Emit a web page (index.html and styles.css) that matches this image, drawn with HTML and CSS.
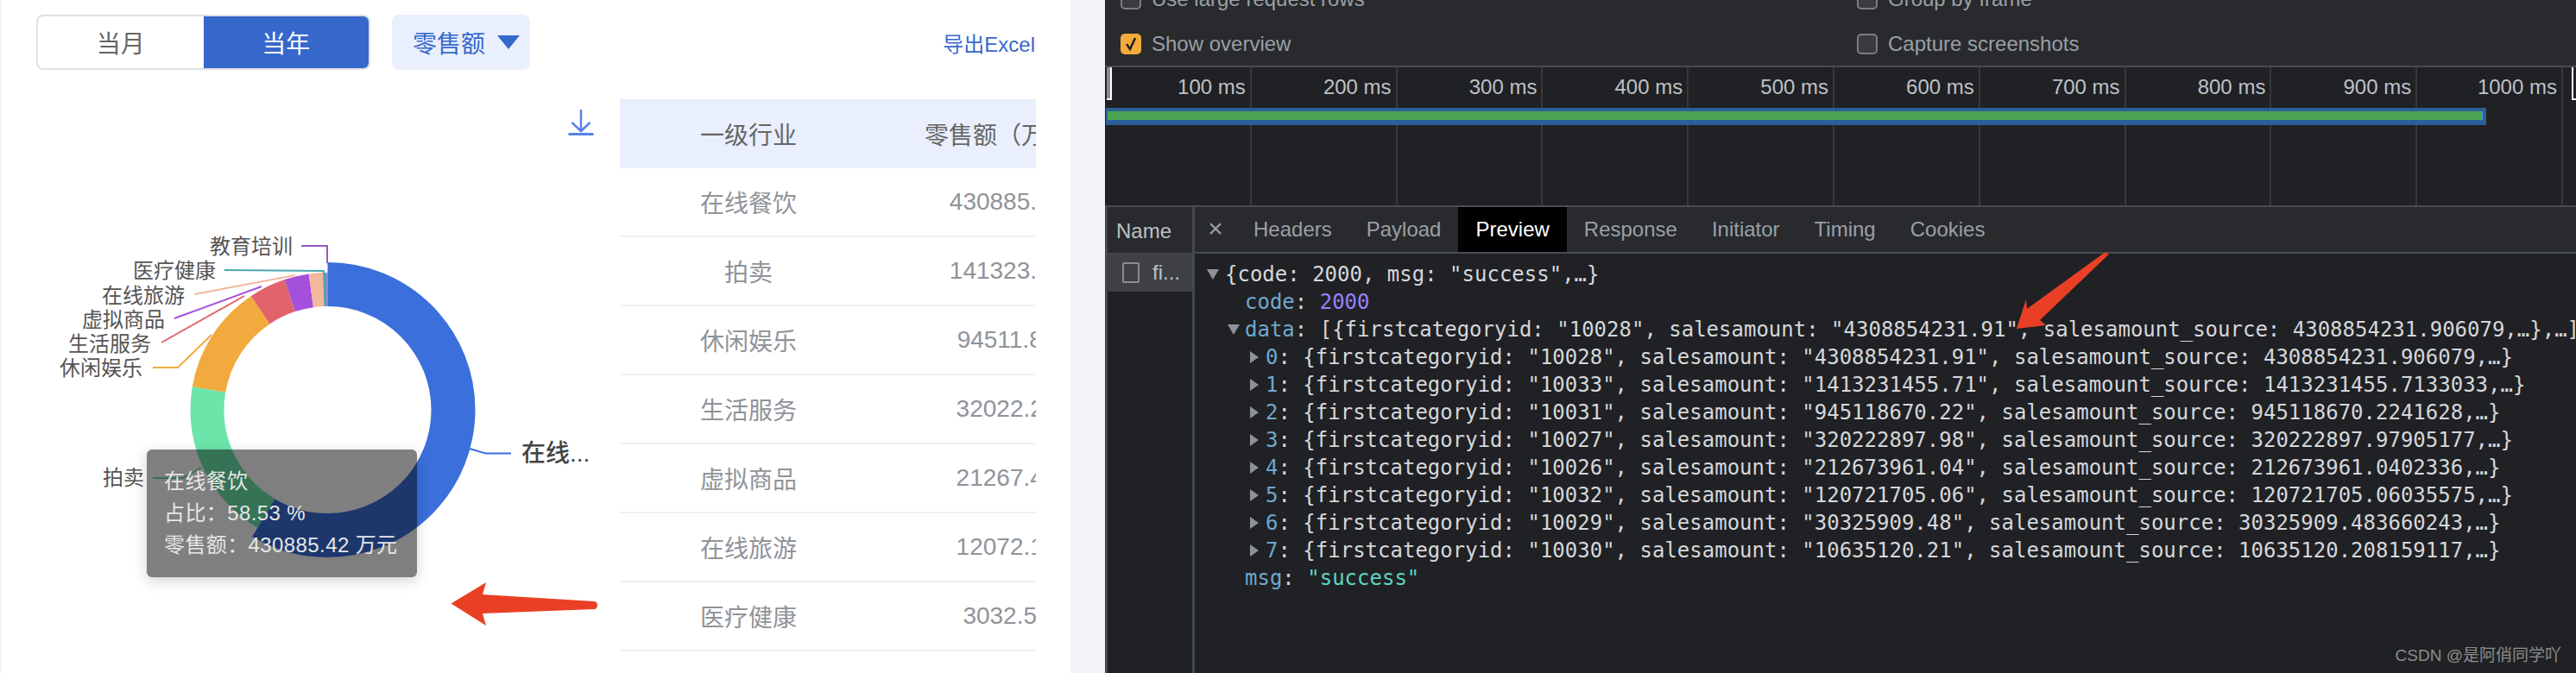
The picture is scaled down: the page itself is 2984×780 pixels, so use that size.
FILE: index.html
```html
<!DOCTYPE html>
<html lang="zh">
<head>
<meta charset="utf-8">
<title>零售额</title>
<link rel="stylesheet" href="styles.css">
</head>
<body>
<div class="page">
  <section class="panel">
    <div class="toolbar">
      <div class="toggle">
        <div class="seg">当月</div>
        <div class="seg seg-on">当年</div>
      </div>
      <div class="drop"><span>零售额</span><i class="caret"></i></div>
      <a class="export">导出Excel</a>
    </div>
    <div class="content">
      <div class="chart">
        <svg class="chart-svg" viewBox="2 115 716 665" width="716" height="665">
          <g fill="none" transform="rotate(-90 379.5 475)">
            <circle cx="379.5" cy="475" r="145.5" stroke="#3b6fdb" stroke-width="51" pathLength="100" stroke-dasharray="58.53 100"/>
            <circle cx="379.5" cy="475" r="139.5" stroke="#6ce5aa" stroke-width="39" pathLength="100" stroke-dasharray="19.197 100" stroke-dashoffset="-58.53"/>
            <circle cx="379.5" cy="475" r="139.5" stroke="#f2aa3e" stroke-width="39" pathLength="100" stroke-dasharray="12.838 100" stroke-dashoffset="-77.727"/>
            <circle cx="379.5" cy="475" r="139.5" stroke="#e2646b" stroke-width="39" pathLength="100" stroke-dasharray="4.35 100" stroke-dashoffset="-90.565"/>
            <circle cx="379.5" cy="475" r="139.5" stroke="#a550dc" stroke-width="39" pathLength="100" stroke-dasharray="2.889 100" stroke-dashoffset="-94.915"/>
            <circle cx="379.5" cy="475" r="139.5" stroke="#f3b79c" stroke-width="39" pathLength="100" stroke-dasharray="1.64 100" stroke-dashoffset="-97.804"/>
            <circle cx="379.5" cy="475" r="139.5" stroke="#4aa8ac" stroke-width="39" pathLength="100" stroke-dasharray="0.412 100" stroke-dashoffset="-99.444"/>
            <circle cx="379.5" cy="475" r="139.5" stroke="#9558c0" stroke-width="39" pathLength="100" stroke-dasharray="0.144 100" stroke-dashoffset="-99.856"/>
          </g>
          <g fill="none" stroke-width="2">
            <path stroke="#9558c0" d="M349 285H379V305"/>
            <path stroke="#4aa8ac" d="M260 313L375 314V316"/>
            <path stroke="#f3b79c" d="M225 341L342 319"/>
            <path stroke="#a550dc" d="M202 369L303 332"/>
            <path stroke="#e2646b" d="M187 397L283 343"/>
            <path stroke="#f2aa3e" d="M177 426H206L245 388"/>
            <path stroke="#6ce5aa" d="M177 554H212L233 542"/>
            <path stroke="#3b6fdb" d="M544 520L562.500 525.500H592"/>
          </g>
          <g class="labels">
            <text x="339" y="285">教育培训</text>
            <text x="250" y="313">医疗健康</text>
            <text x="214" y="342">在线旅游</text>
            <text x="191" y="370">虚拟商品</text>
            <text x="175" y="398">生活服务</text>
            <text x="165" y="426">休闲娱乐</text>
            <text x="167" y="553">拍卖</text>
            <text class="label-main" x="604" y="525">在线...</text>
          </g>
          <g fill="none" stroke="#5b80e8" stroke-width="2.500">
            <path d="M673 127V151M662.500 142L673 152L683.500 142"/>
            <path stroke-width="3" d="M658.500 155.500H687.500"/>
          </g>
          <path fill="#e94025" d="M522.500 699.500L563 675L559 689L689 697Q692 698 692 701.500Q692 705 689 706L559 711L563 725Z"/>
        </svg>
        <div class="tip">
          <div>在线餐饮</div>
          <div>占比：58.53 %</div>
          <div>零售额：430885.42 万元</div>
        </div>
      </div>
      <div class="table">
        <div class="tr th"><div>一级行业</div><div>零售额（万元）</div></div>
        <div class="tr"><div>在线餐饮</div><div class="num">430885.42</div></div>
        <div class="tr"><div>拍卖</div><div class="num">141323.14</div></div>
        <div class="tr"><div>休闲娱乐</div><div class="num">94511.87</div></div>
        <div class="tr"><div>生活服务</div><div class="num">32022.29</div></div>
        <div class="tr"><div>虚拟商品</div><div class="num">21267.40</div></div>
        <div class="tr"><div>在线旅游</div><div class="num">12072.17</div></div>
        <div class="tr"><div>医疗健康</div><div class="num">3032.59</div></div>
      </div>
    </div>
  </section>

  <section class="devtools">
    <div class="settings">
      <div class="settings-grid">
        <label class="opt"><i class="cb"></i>Use large request rows</label>
        <label class="opt"><i class="cb"></i>Group by frame</label>
        <label class="opt"><i class="cb cb-on"><svg viewBox="0 0 24 24" width="24" height="24"><path d="M7 12L11 18L17 5" fill="none" stroke="#202124" stroke-width="2.500"/></svg></i>Show overview</label>
        <label class="opt"><i class="cb"></i>Capture screenshots</label>
      </div>
    </div>
    <div class="overview">
      <div class="ticks">
        <div class="tick">100 ms</div><div class="tick">200 ms</div><div class="tick">300 ms</div><div class="tick">400 ms</div><div class="tick">500 ms</div>
        <div class="tick">600 ms</div><div class="tick">700 ms</div><div class="tick">800 ms</div><div class="tick">900 ms</div><div class="tick">1000 ms</div>
      </div>
      <div class="bar"><div class="bar-in"></div></div>
      <i class="handle handle-l"></i>
      <i class="handle handle-r"></i>
    </div>
    <div class="detail">
      <aside class="side">
        <div class="side-head">Name</div>
        <div class="side-row"><i class="file"></i><span>fi...</span></div>
      </aside>
      <div class="pane">
        <nav class="tabs">
          <span class="close">×</span>
          <span class="tab">Headers</span>
          <span class="tab">Payload</span>
          <span class="tab tab-on">Preview</span>
          <span class="tab">Response</span>
          <span class="tab">Initiator</span>
          <span class="tab">Timing</span>
          <span class="tab">Cookies</span>
        </nav>
        <div class="preview">
          <div class="row lv0"><i class="tri-open"></i><span>{code: 2000, msg: "success",…}</span></div>
          <div class="row lv1"><span><b class="k">code</b>: <b class="n">2000</b></span></div>
          <div class="row lv1t"><i class="tri-open"></i><span><b class="k">data</b>: [{firstcategoryid: "10028", salesamount: "4308854231.91", salesamount_source: 4308854231.906079,…},…]</span></div>
          <div class="row lv2"><i class="tri"></i><span><b class="k">0</b>: {firstcategoryid: "10028", salesamount: "4308854231.91", salesamount_source: 4308854231.906079,…}</span></div>
          <div class="row lv2"><i class="tri"></i><span><b class="k">1</b>: {firstcategoryid: "10033", salesamount: "1413231455.71", salesamount_source: 1413231455.7133033,…}</span></div>
          <div class="row lv2"><i class="tri"></i><span><b class="k">2</b>: {firstcategoryid: "10031", salesamount: "945118670.22", salesamount_source: 945118670.2241628,…}</span></div>
          <div class="row lv2"><i class="tri"></i><span><b class="k">3</b>: {firstcategoryid: "10027", salesamount: "320222897.98", salesamount_source: 320222897.97905177,…}</span></div>
          <div class="row lv2"><i class="tri"></i><span><b class="k">4</b>: {firstcategoryid: "10026", salesamount: "212673961.04", salesamount_source: 212673961.0402336,…}</span></div>
          <div class="row lv2"><i class="tri"></i><span><b class="k">5</b>: {firstcategoryid: "10032", salesamount: "120721705.06", salesamount_source: 120721705.06035575,…}</span></div>
          <div class="row lv2"><i class="tri"></i><span><b class="k">6</b>: {firstcategoryid: "10029", salesamount: "30325909.48", salesamount_source: 30325909.483660243,…}</span></div>
          <div class="row lv2"><i class="tri"></i><span><b class="k">7</b>: {firstcategoryid: "10030", salesamount: "10635120.21", salesamount_source: 10635120.208159117,…}</span></div>
          <div class="row lv1"><span><b class="k">msg</b>: <b class="s">"success"</b></span></div>
        </div>
        <svg class="callout" viewBox="0 0 120 100" width="120" height="100">
          <path fill="#e94025" d="M103.500 1Q107 0 108.500 3L29 79L36 85L2 89L13 55L14 66Z"/>
        </svg>
      </div>
    </div>
    <div class="mark">CSDN @是阿俏同学吖</div>
  </section>
</div>
</body>
</html>
```
FILE: styles.css
```css
* { box-sizing: border-box; }
html, body { margin: 0; padding: 0; }
body {
  width: 2984px;
  height: 780px;
  overflow: hidden;
  background: #f2f4f9;
  font-family: "Liberation Sans", "Noto Sans CJK SC", sans-serif;
}
.page { display: flex; height: 780px; padding-left: 2px; }

/* left panel */
.panel {
  width: 1238px;
  height: 780px;
  margin-right: 40px;
  padding-top: 17px;
  background: #fff;
  flex: none;
  overflow: hidden;
}
.toolbar {
  display: flex;
  align-items: center;
  height: 64px;
  padding: 0 41px 0 40px;
  font-size: 28px;
}
.toggle {
  display: flex;
  width: 387px;
  height: 64px;
  flex: none;
  border: 2px solid #dfe0e5;
  border-radius: 8px;
  overflow: hidden;
}
.seg {
  flex: 1;
  display: flex;
  align-items: center;
  justify-content: center;
  color: #666;
}
.seg-on { background: #3668cc; color: #fff; }
.drop {
  display: flex;
  align-items: center;
  gap: 14px;
  height: 64px;
  margin-left: 25px;
  padding: 0 12px 0 24px;
  border-radius: 8px;
  background: #e9effc;
  color: #3668cc;
}
.caret {
  width: 0;
  height: 0;
  border-left: 13px solid transparent;
  border-right: 13px solid transparent;
  border-top: 16px solid #3668cc;
}
.export { margin-left: auto; font-size: 24px; color: #3668cc; }

.content { display: flex; height: 665px; margin-top: 34px; }
.chart { position: relative; width: 716px; height: 665px; flex: none; }
.chart-svg { display: block; }
.labels text {
  font-size: 24px;
  fill: #555;
  text-anchor: end;
  dominant-baseline: central;
}
.labels .label-main {
  font-size: 28px;
  font-weight: 500;
  fill: #444;
  text-anchor: start;
}
.tip {
  position: absolute;
  left: 168px;
  top: 406px;
  width: 313px;
  height: 148px;
  padding: 18px 20px;
  background: rgba(0, 0, 0, .5);
  border-radius: 6px;
  box-shadow: 0 4px 16px rgba(0, 0, 0, .18);
  color: #e6e6e6;
  font-size: 24px;
  line-height: 37px;
  letter-spacing: .4px;
  white-space: nowrap;
}

.table { width: 482px; overflow: hidden; flex: none; }
.tr {
  display: grid;
  grid-template-columns: 298px 306px;
  width: 604px;
  height: 80px;
  align-items: center;
  text-align: center;
  font-size: 28px;
  color: #909399;
  border-bottom: 2px solid #eef0f5;
}
.th { background: #e9effc; color: #666; border-bottom: 0; }
.num { padding-right: 6px; }

/* devtools */
.devtools {
  position: relative;
  width: 1704px;
  height: 780px;
  flex: none;
  background: #292a2d;
  color: #9aa0a6;
  font-size: 24px;
  overflow: hidden;
}
.settings { height: 78px; border-bottom: 2px solid #494c50; overflow: hidden; }
.settings-grid {
  display: grid;
  grid-template-columns: 853px 1fr;
  grid-auto-rows: 52px;
  margin-top: -27px;
  padding-left: 18px;
}
.opt { display: flex; align-items: center; gap: 12px; }
.cb {
  width: 24px;
  height: 24px;
  flex: none;
  border: 2px solid #7a7d81;
  border-radius: 5px;
  background: #3a3b3e;
}
.cb-on { border: 0; background: #f4ab3a; }
.cb svg { display: block; }

.overview {
  position: relative;
  height: 162px;
  padding-left: 1px;
  background: #202124;
  border-bottom: 2px solid #494c50;
}
.ticks { display: grid; grid-template-columns: repeat(10, 168.8px); height: 160px; }
.tick {
  padding-right: 5px;
  border-right: 2px solid #36383c;
  text-align: right;
  line-height: 46px;
  color: #bdc1c6;
}
.bar {
  position: absolute;
  left: 1px;
  top: 47px;
  width: 1599px;
  height: 20px;
  padding: 4px 4px 6px 2px;
  background: #2c5f97;
}
.bar-in { height: 10px; background: #4ca553; border-right: 2px solid #4f8fd0; }
.handle { position: absolute; top: 0; width: 6px; height: 38px; }
.handle-l { left: 2px; background: #8a8c8f; border-right: 2px solid #fff; border-bottom: 2px solid #fff; }
.handle-r { right: 0; width: 5px; border-left: 2px solid #fff; border-bottom: 2px solid #fff; }

.detail { display: flex; height: 540px; }
.side {
  width: 104px;
  flex: none;
  background: #202124;
  border-left: 3px solid #45484c;
  border-right: 3px solid #45484c;
}
.side-head {
  height: 54px;
  padding: 0 10px;
  line-height: 56px;
  color: #bdc1c6;
  background: #292a2d;
  border-bottom: 1px solid #45484c;
}
.side-row {
  display: flex;
  align-items: center;
  gap: 15px;
  height: 44px;
  padding-left: 17px;
  background: #3e4043;
  color: #bdc1c6;
}
.file {
  width: 20px;
  height: 24px;
  flex: none;
  border: 2px solid #8a8d91;
  border-radius: 2px;
}
.pane { position: relative; flex: 1; min-width: 0; background: #202124; }
.tabs {
  display: flex;
  height: 54px;
  background: #292a2d;
  border-bottom: 2px solid #494c50;
}
.close {
  width: 48px;
  text-align: center;
  font-size: 30px;
  line-height: 50px;
  color: #9aa0a6;
}
.tab { padding: 0 20px; line-height: 52px; height: 52px; }
.tab-on { background: #000; color: #fff; }
.preview {
  padding-top: 8px;
  overflow: hidden;
  font-family: "DejaVu Sans Mono", monospace;
  color: #d5d7db;
}
.row { display: flex; align-items: center; height: 32px; }
.row span { white-space: pre; }
.lv0 { padding-left: 14px; }
.lv1 { padding-left: 58px; }
.lv1t { padding-left: 38px; }
.lv2 { padding-left: 64px; }
.row b { font-weight: 400; }
.k { color: #6fa8d0; }
.n { color: #9980ff; }
.s { color: #5cd5c0; }
.tri-open {
  width: 0;
  height: 0;
  flex: none;
  margin-right: 7px;
  border-left: 7px solid transparent;
  border-right: 7px solid transparent;
  border-top: 12px solid #8f9296;
}
.lv1t .tri-open { margin-right: 6px; }
.tri {
  width: 0;
  height: 0;
  flex: none;
  margin-right: 8px;
  border-top: 7px solid transparent;
  border-bottom: 7px solid transparent;
  border-left: 10px solid #8f9296;
}
.callout { position: absolute; left: 950px; top: 52px; }
.mark {
  position: absolute;
  right: 17px;
  top: 746px;
  font-size: 19px;
  line-height: 28px;
  color: #8c8c8c;
}
```
